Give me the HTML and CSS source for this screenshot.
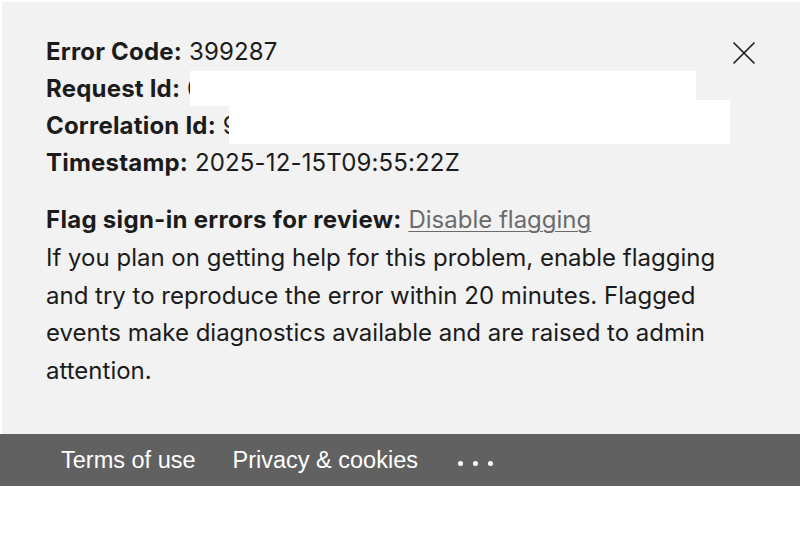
FILE: index.html
```html
<!DOCTYPE html>
<html lang="en">
<head>
<meta charset="utf-8">
<title>Error details</title>
<link rel="stylesheet" href="styles.css">
</head>
<body>
<div class="page">
  <section class="panel">
    <button class="close" aria-label="Close">
      <svg width="24" height="24" viewBox="0 0 24 24"><path d="M1.5 1.5 L22.5 22.5 M22.5 1.5 L1.5 22.5" stroke="#1b1b1b" stroke-width="1.6" fill="none"/></svg>
    </button>
    <div class="details">
      <div class="row"><b>Error Code:</b> 399287</div>
      <div class="row"><b>Request Id:</b> 0<span class="redact redact-req"></span></div>
      <div class="row"><b>Correlation Id:</b> 9<span class="redact redact-corr"></span></div>
      <div class="row"><b>Timestamp:</b> 2025-12-15T09:55:22Z</div>
    </div>
    <div class="flag">
      <div class="flag-title"><b>Flag sign-in errors for review:</b> <a href="#" class="link">Disable flagging</a></div>
      <p class="flag-text">If you plan on getting help for this problem, enable flagging and try to reproduce the error within 20 minutes. Flagged events make diagnostics available and are raised to admin attention.</p>
    </div>
  </section>
  <footer class="footer">
    <a href="#" class="foot-link">Terms of use</a>
    <a href="#" class="foot-link">Privacy &amp; cookies</a>
    <span class="dots"><i></i><i></i><i></i></span>
  </footer>
</div>
</body>
</html>
```
FILE: styles.css
```css
html, body {
  margin: 0;
  padding: 0;
  background: #ffffff;
}
body {
  font-family: Inter, "Noto Sans", sans-serif;
  color: #1b1b1b;
}
.page {
  padding-top: 2px;
  padding-left: 2px;
}
.panel {
  position: relative;
  background: #f2f2f2;
  height: 432px;
  box-sizing: border-box;
  padding: 31px 0 0 44px;
  font-size: 24px;
}
.close {
  position: absolute;
  top: 39px;
  right: 44px;
  width: 24px;
  height: 24px;
  padding: 0;
  border: 0;
  background: transparent;
}
.close svg { display: block; }
.details { position: relative; }
.row {
  position: relative;
  line-height: 37px;
  height: 37px;
  white-space: nowrap;
  letter-spacing: 0.15px;
}
.row b { font-weight: 700; letter-spacing: 0.2px; }
.redact {
  position: absolute;
  background: #ffffff;
}
.redact-req {
  left: 144px;
  top: 1px;
  width: 506px;
  height: 35px;
}
.redact-corr {
  left: 183px;
  top: -7px;
  width: 501px;
  height: 44px;
}
.flag {
  margin-top: 20px;
}
.flag-title {
  line-height: 37px;
}
.flag-title b { font-weight: 700; letter-spacing: 0.3px; }
.link {
  color: #6b6b6b;
  text-decoration: underline;
  text-underline-offset: 3px;
  text-decoration-thickness: 1px;
}
.flag-text {
  margin: 0;
  margin-top: 1px;
  width: 680px;
  line-height: 37.5px;
}
.footer {
  display: flex;
  align-items: center;
  gap: 37px;
  height: 52px;
  margin-left: -2px;
  background: #616161;
  padding-left: 61px;
  font-family: "Liberation Sans", sans-serif;
  font-size: 23.5px;
}
.foot-link {
  color: #ffffff;
  text-decoration: none;
}
.dots {
  display: flex;
  gap: 10px;
  margin-left: 3px;
  padding-top: 6px;
}
.dots i {
  display: block;
  width: 5px;
  height: 5px;
  border-radius: 50%;
  background: #ffffff;
}
```
